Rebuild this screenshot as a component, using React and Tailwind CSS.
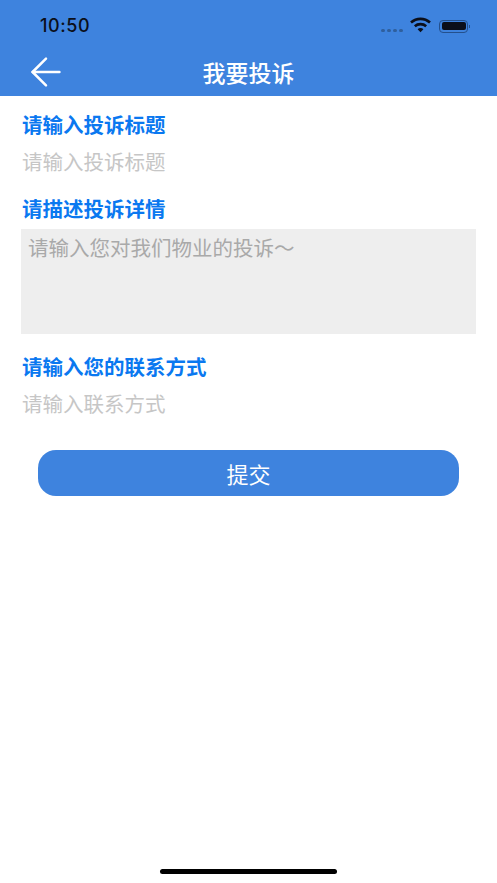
import { ArrowLeft } from "lucide-react";

function StatusBar() {
  return (
    <div className="h-[48px] flex items-start justify-between pl-[40px] pr-[27px] pt-[15px]">
      <span className="text-[18px] leading-[22px] font-medium tracking-[0.6px] text-[#0b0f1a] font-['Inter',sans-serif]">
        10:50
      </span>
      <div className="flex items-center gap-[7px] h-[22px]">
        {/* signal dots */}
        <div className="flex gap-[2px] mt-[8px]">
          <span className="w-[4px] h-[3px] rounded-full bg-[#2f5f9e]" />
          <span className="w-[4px] h-[3px] rounded-full bg-[#2f5f9e]" />
          <span className="w-[4px] h-[3px] rounded-full bg-[#2f5f9e]" />
          <span className="w-[4px] h-[3px] rounded-full bg-[#2f5f9e]" />
        </div>
        {/* wifi */}
        <svg width="21" height="16" viewBox="0 0 21 16" className="mb-[3px]">
          <path d="M1 5.5C6.5 0.6 14.5 0.6 20 5.5" fill="none" stroke="#0b0f1a" strokeWidth="2.6" />
          <path d="M4.8 9.2C8 6.4 13 6.4 16.2 9.2" fill="none" stroke="#0b0f1a" strokeWidth="2.6" />
          <path d="M7.6 12.2L10.5 15.2L13.4 12.2C11.8 10.7 9.2 10.7 7.6 12.2Z" fill="#0b0f1a" />
        </svg>
        {/* battery */}
        <div className="flex items-center gap-[1px] ml-[1px]">
          <div className="w-[29px] h-[13px] rounded-[4px] border border-[#24508c] p-[1.5px]">
            <div className="w-full h-full rounded-[2px] bg-[#0b0f1a]" />
          </div>
          <span className="w-[1px] h-[3px] bg-[#24508c]" />
        </div>
      </div>
    </div>
  );
}

function Field({ label, placeholder }) {
  return (
    <div>
      <h3 className="pl-[22px] text-[20.5px] leading-[28px] font-semibold text-[#0a78f0]">
        {label}
      </h3>
      <input
        type="text"
        placeholder={placeholder}
        className="mt-[9px] w-full h-[28px] pl-[22px] text-[20.5px] outline-none placeholder:text-[#c6c6c6]"
      />
    </div>
  );
}

export default function App() {
  return (
    <div className="min-h-screen flex flex-col bg-white font-['Noto_Sans_CJK_SC',sans-serif]">
      {/* HEADER */}
      <header className="h-[96px] bg-[#3e83de] flex flex-col">
        <StatusBar />
        <div className="relative flex-1 flex items-center justify-center">
          <ArrowLeft
            className="absolute left-[23px] top-[1px] text-white"
            size={46}
            strokeWidth={1.3}
          />
          <h1 className="text-[23px] leading-[32px] font-medium text-white">我要投诉</h1>
        </div>
      </header>

      {/* FORM */}
      <div className="pt-[14px]">
        <Field label="请输入投诉标题" placeholder="请输入投诉标题" />

        <h3 className="mt-[19px] pl-[22px] text-[20.5px] leading-[28px] font-semibold text-[#0a78f0]">
          请描述投诉详情
        </h3>
        <div className="px-[21px] mt-[7px]">
          <textarea
            placeholder="请输入您对我们物业的投诉～"
            className="block w-full h-[105px] resize-none bg-[#eeeeee] px-[7px] py-[4px] text-[20.5px] leading-[28px] outline-none placeholder:text-[#a9a9a9]"
          />
        </div>

        <div className="mt-[18px]">
          <Field label="请输入您的联系方式" placeholder="请输入联系方式" />
        </div>

        <div className="px-[38px] mt-[33px]">
          <button className="w-full h-[46px] rounded-[18px] bg-[#3e83de] text-white text-[22px]">
            提交
          </button>
        </div>
      </div>

      {/* HOME INDICATOR */}
      <div className="mt-auto pb-[9px] flex justify-center">
        <span className="w-[177px] h-[5px] rounded-full bg-black" />
      </div>
    </div>
  );
}
